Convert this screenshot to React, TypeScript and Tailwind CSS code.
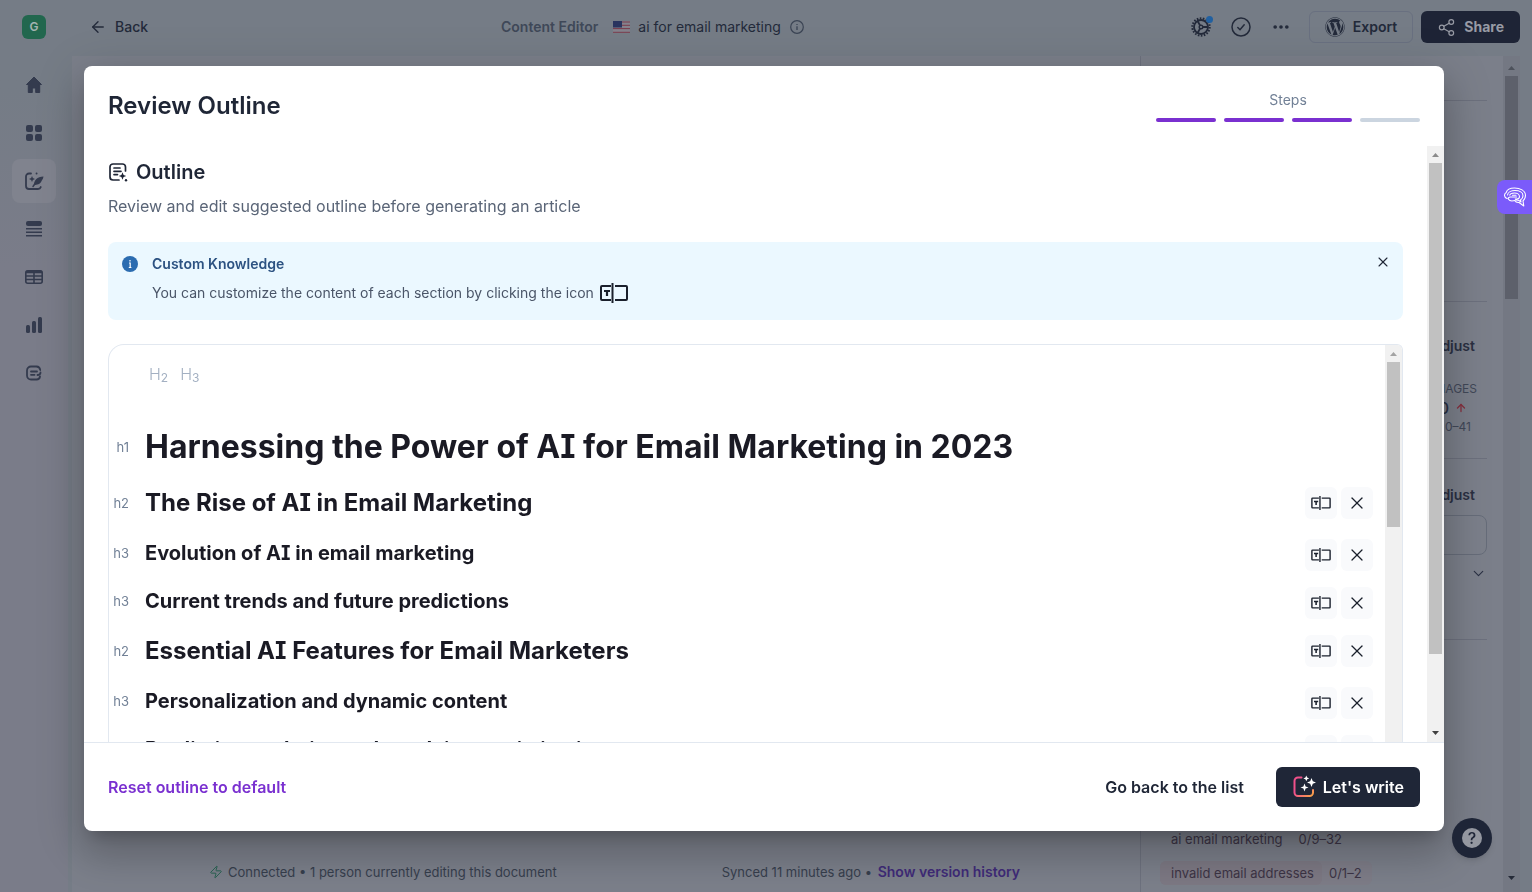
import type { ReactNode } from 'react';
import { ArrowLeft, ArrowUp, ChevronDown, Ellipsis, Share2, X, Zap } from 'lucide-react';
import { FaWordpress } from 'react-icons/fa';

type Level = 'h1' | 'h2' | 'h3';

const outline: { level: Level; text: string }[] = [
    { level: 'h2', text: 'The Rise of AI in Email Marketing' },
    { level: 'h3', text: 'Evolution of AI in email marketing' },
    { level: 'h3', text: 'Current trends and future predictions' },
    { level: 'h2', text: 'Essential AI Features for Email Marketers' },
    { level: 'h3', text: 'Personalization and dynamic content' },
    { level: 'h3', text: 'Predictive analytics and send time optimization' },
];

const SectionIcon = ({ className }: { className: string }) => (
    <svg viewBox="0 0 28 20" className={className} fill="none" stroke="currentColor" strokeWidth="2" aria-hidden="true">
        <path d="M11 3H2a1 1 0 0 0-1 1v12a1 1 0 0 0 1 1h9M12.500 0v20M15 3h11a1 1 0 0 1 1 1v12a1 1 0 0 1-1 1H15" />
        <path d="M4 8h6M7 8v5" strokeWidth="2.200" />
    </svg>
);

const OutlineIcon = () => (
    <svg viewBox="0 0 20 20" className="w-5 h-5" fill="none" stroke="currentColor" strokeWidth="1.700" strokeLinecap="round" aria-hidden="true">
        <path d="M17.500 9V5a3 3 0 0 0-3-3H5a3 3 0 0 0-3 3v10a3 3 0 0 0 3 3h6" />
        <path d="M6 6h6M6 9.300h7M6 12.600h3.500" />
        <path d="M14.500 10.200l1.100 2.700 2.700 1.100-2.700 1.100-1.100 2.700-1.100-2.700-2.700-1.100 2.700-1.100z" fill="currentColor" stroke="none" />
        <circle cx="18" cy="18.300" r="1.200" fill="currentColor" stroke="none" />
    </svg>
);

const GearIcon = () => (
    <svg viewBox="0 0 20 20" className="w-5 h-5" fill="none" stroke="currentColor" aria-hidden="true">
        <circle cx="10" cy="10" r="8.700" strokeWidth="2" strokeDasharray="1.600 1.437" />
        <circle cx="10" cy="10" r="7" strokeWidth="1.800" />
        <circle cx="10" cy="10" r="1.800" strokeWidth="1.400" />
        <path d="M12 10h5M9 8.300L6.500 4M9 11.700L6.500 16" strokeWidth="1.800" />
    </svg>
);

const WriteIcon = () => (
    <svg viewBox="0 0 24 24" className="w-6 h-6" fill="none" aria-hidden="true">
        <defs>
            <linearGradient id="write" x1="2" y1="3" x2="22" y2="23" gradientUnits="userSpaceOnUse">
                <stop offset="0.400" stopColor="#f0508a" />
                <stop offset="1" stopColor="#fbb13c" />
            </linearGradient>
        </defs>
        <path d="M9.500 2.500H6A3.500 3.500 0 0 0 2.500 6v11.500A3.500 3.500 0 0 0 6 21h11.500a3.500 3.500 0 0 0 3.500-3.500V15" stroke="url(#write)" strokeWidth="2" strokeLinecap="round" />
        <g fill="#fff">
            <path d="M19.500 3l1.300 3.200L24 7.500l-3.200 1.300-1.300 3.200-1.300-3.200L15 7.500l3.200-1.300z" />
            <path d="M12.500 8.500l1.100 2.900 2.900 1.100-2.900 1.100-1.100 2.900-1.100-2.900-2.900-1.100 2.900-1.100z" />
            <path d="M14.300.5l.9 2 2 .9-2 .9-.9 2-.9-2-2-.9 2-.9z" />
        </g>
    </svg>
);

const BrainIcon = () => (
    <svg viewBox="0 0 24 20" className="w-6 h-5" fill="none" stroke="#fff" strokeWidth="1.100" strokeLinecap="round" strokeLinejoin="round" aria-hidden="true">
        <path d="M4 11.500C1 10.500.7 7 3.200 5.500 4 2.500 8 1 11.500 1c5.500 0 11 2.500 11 7.500 0 3-1.200 4.200-2.500 5.500l.8 5-4.800-3.500c-2 .2-3.500-.5-4-2-3 .8-5.500.5-6.500-1.200-.8-1.300.5-2.500 2-2.300h6" />
        <path d="M4.500 8c.3-3 4-4.500 7.500-4.500 4.500 0 8 2 8 5.200 0 2-1 3.300-2.500 4.300l.5 2-2.500-1.800c-1.500.2-2.700-.2-3.200-1.200 2.500 0 4.200-.8 4.200-2.300C16.500 7.500 14 6 11.500 6 9 6 7 7 6.800 8.200" />
        <path d="M9.500 8.200h3.500" />
    </svg>
);

const navItems: { label: string; icon: ReactNode }[] = [
    {
        label: 'Home',
        icon: <path d="M10 2L2.500 9.500h1.800v8h4V13h3.400v4.500h4v-8h1.800z" fill="currentColor" stroke="currentColor" strokeLinejoin="round" />,
    },
    {
        label: 'Dashboard',
        icon: (
            <g fill="currentColor">
                <rect x="2" y="2" width="7" height="7" rx="2" />
                <rect x="11" y="2" width="7" height="7" rx="2" />
                <rect x="2" y="11" width="7" height="7" rx="2" />
                <rect x="11" y="11" width="7" height="7" rx="2" />
            </g>
        ),
    },
    {
        label: 'Content Editor',
        icon: (
            <g fill="none" stroke="currentColor" strokeWidth="1.800" strokeLinecap="round">
                <path d="M7 2.500H5a3 3 0 0 0-3 3V15a3 3 0 0 0 3 3h9a3 3 0 0 0 2.800-2" />
                <path d="M10 14c0-5 3-8 9.500-8.500-.3 2-1 3-1.800 4.200-1.500 3.500-4.700 4.300-7.700 4.300z" fill="currentColor" stroke="none" />
                <path d="M9 15.500l3.500-5" strokeWidth="1.500" />
                <path d="M8 5l.9 2.100 2.100.9-2.100.9L8 11l-.9-2.100L5 8l2.100-.9z" fill="currentColor" stroke="none" />
                <path d="M12.500 2.500h.1" />
            </g>
        ),
    },
    {
        label: 'Queries',
        icon: (
            <g fill="currentColor">
                <rect x="2" y="2" width="16" height="5" rx="2" />
                <rect x="2" y="9" width="16" height="1.500" />
                <rect x="2" y="12.500" width="16" height="1.500" />
                <rect x="2" y="16" width="16" height="1.500" />
            </g>
        ),
    },
    {
        label: 'Tables',
        icon: (
            <g fill="none" stroke="currentColor" strokeWidth="1.600">
                <rect x="1.800" y="3.800" width="16.400" height="12.400" rx="2" />
                <path d="M2 5h16" strokeWidth="2.500" />
                <path d="M2 9h16M2 12.500h16M10 5v11" />
            </g>
        ),
    },
    {
        label: 'Reports',
        icon: (
            <g fill="currentColor">
                <rect x="2" y="10" width="4" height="8" rx="1.500" />
                <rect x="8" y="6" width="4" height="12" rx="1.500" />
                <rect x="14" y="2" width="4" height="16" rx="1.500" />
            </g>
        ),
    },
    {
        label: 'Drafts',
        icon: (
            <g fill="none" stroke="currentColor" strokeWidth="1.800" strokeLinecap="round">
                <path d="M16.200 7A4 4 0 0 0 12.500 3.500H7A4 4 0 0 0 3 7.500v5a4 4 0 0 0 4 4h5.500a3.500 3.500 0 0 0 3.500-3" />
                <path d="M7 8.500h6M7 11.800h3.500" />
                <path d="M13.500 12c2 0 3-1 3-2.500" />
            </g>
        ),
    },
];

const Arrow = ({ up = false, className = '' }: { up?: boolean; className?: string }) => (
    <svg viewBox="0 0 7 4" className={`w-[7px] h-1 ${className}`} fill="currentColor" aria-hidden="true">
        <path d={up ? 'M0 4l3.500-4L7 4z' : 'M0 0l3.500 4L7 0z'} />
    </svg>
);

const Sidebar = () => (
    <aside className="w-[68px] shrink-0 flex flex-col items-center pt-[15px] bg-linear-to-b from-[#757c86] from-10% to-[#7a7c89] to-30% text-[#343b4e]">
        <div className="w-6 h-6 rounded-md bg-[#22674e] text-[#a4b4b2] text-xs font-semibold flex items-center justify-center">G</div>
        <nav className="mt-6 flex flex-col gap-1">
            {navItems.map((item, i) => (
                <a
                    key={item.label}
                    href="#"
                    aria-label={item.label}
                    className={`w-11 h-11 rounded-lg flex items-center justify-center ${i === 2 ? 'bg-[#80838e]' : ''}`}
                >
                    <svg viewBox="0 0 20 20" className="w-5 h-5">{item.icon}</svg>
                </a>
            ))}
        </nav>
    </aside>
);

const TopBar = () => (
    <header className="h-[54px] shrink-0 flex items-center justify-between pl-[21px] text-sm text-[#232a3a]">
        <button className="flex items-center gap-2 font-medium">
            <ArrowLeft size={18} strokeWidth={1.8} /> Back
        </button>
        <div className="flex items-center">
            <span className="font-semibold text-[#3f4858]">Content Editor</span>
            <svg viewBox="0 0 17 12" className="ml-[15px] mr-2 w-[17px] h-3" aria-hidden="true">
                <rect width="17" height="12" fill="#84828c" />
                <path d="M0 1h17M0 4.300h17M0 7.600h17M0 11.300h17" stroke="#7b3b4c" strokeWidth="1" />
                <rect width="9" height="6.500" fill="#29345f" />
            </svg>
            <span>ai for email marketing</span>
            <svg viewBox="0 0 14 14" className="ml-[9px] w-3.5 h-3.5" fill="none" stroke="#3b4454" aria-hidden="true">
                <circle cx="7" cy="7" r="6.300" strokeWidth="1.200" />
                <path d="M7 6.300V10M7 4v1" strokeWidth="1.300" />
            </svg>
        </div>
        <div className="pl-[34px] flex items-center">
            <button aria-label="Settings" className="relative w-10 flex justify-center -ml-2.5">
                <GearIcon />
                <span className="absolute right-2 top-0 -mt-px w-[7px] h-[7px] rounded-full bg-[#2160a0]" />
            </button>
            <button aria-label="Mark as done" className="w-10 flex justify-center">
                <svg viewBox="0 0 20 20" className="w-5 h-5" fill="none" stroke="currentColor" strokeWidth="1.500" strokeLinecap="round">
                    <circle cx="10" cy="10" r="9" />
                    <path d="M6.800 10.500l2.200 2.200 4.200-5" />
                </svg>
            </button>
            <button aria-label="More" className="w-10 flex justify-center">
                <Ellipsis size={20} strokeWidth={2.4} />
            </button>
            <button className="ml-2 h-8 px-[15px] flex items-center gap-2 rounded-md border border-[#697080] font-semibold">
                <FaWordpress size={20} /> Export
            </button>
            <button className="ml-2 h-8 px-4 flex items-center gap-2 rounded-md bg-[#1e2436] text-[#989ba5] font-bold">
                <Share2 size={19} strokeWidth={1.5} /> Share
            </button>
        </div>
    </header>
);

const SidePanel = () => (
    <section className="w-[363px] shrink-0 border-l border-[#6d717e] pt-11 pr-4 pl-[19px] flex flex-col items-end text-[#2a3042]">
        <div className="w-full border-t border-[#6c707d] h-[201px]" />
        <div className="w-full border-t border-[#6c707d] h-[157px] pt-[34px] pr-3 text-right">
            <p className="text-sm leading-5 font-semibold">Adjust</p>
            <p className="mt-[25px] -mr-0.5 text-xs leading-4 text-[#414858]">IMAGES</p>
            <p className="mt-px pr-2 flex items-center justify-end gap-1.5 text-base leading-5 font-medium">
                0 <ArrowUp size={12} strokeWidth={2.6} className="text-[#85303f]" />
            </p>
            <p className="pr-1 mt-px text-xs leading-4 text-[#414858]">0–41</p>
        </div>
        <div className="w-full border-t border-[#6c707d] h-[181px] pt-[26px]">
            <p className="pr-3 text-right text-sm leading-5 font-semibold">Adjust</p>
            <input aria-label="Search terms" className="mt-2.5 block w-full h-10 rounded-lg border border-[#666c79]" />
            <ChevronDown size={17} strokeWidth={1.6} className="ml-auto mt-2.5" />
        </div>
        <div className="w-full flex-1 border-t border-[#6c707d] flex flex-col justify-end items-start gap-2.5 pb-[7px] text-[13px] leading-6 text-[#3c3445]">
            <p className="pl-[11px] flex gap-4">
                <span>ai email marketing</span> <span>0/9–32</span>
            </p>
            <p className="pr-2.5 flex rounded-md bg-[#7d7c87]">
                <span className="pl-[11px] pr-2 rounded-md bg-[#7c7883]">invalid email addresses</span>
                <span className="pl-[7px]">0/1–2</span>
            </p>
        </div>
    </section>
);

const Backdrop = () => (
    <div className="h-screen flex bg-[#757c86]">
        <Sidebar />
        <div className="flex-1 min-w-0 flex flex-col pr-3">
            <TopBar />
            <main className="mt-0.5 ml-1 flex-1 min-h-0 flex bg-[#7b7f8a] overflow-hidden">
                <div className="flex-1 flex flex-col justify-end px-[120px] pb-2.5">
                    <div className="ml-[17px] flex items-center justify-between text-[13px] leading-5 text-[#363e4d]">
                        <p className="flex items-center gap-[5px]">
                            <Zap size={14} strokeWidth={1.6} className="text-[#256150]" /> Connected • 1 person currently editing this document
                        </p>
                        <p>
                            Synced 11 minutes ago • <a href="#" className="ml-0.5 text-sm font-semibold text-[#3f2b78]">Show version history</a>
                        </p>
                    </div>
                </div>
                <SidePanel />
                <div className="w-[17px] shrink-0 pt-[10px] pb-3 flex flex-col items-center bg-[#747883] text-[#4d515b]">
                    <Arrow up />
                    <div className="mt-1.5 w-[13px] h-[223px] bg-[#5d606b]" />
                    <Arrow className="mt-auto text-[#252a38]" />
                </div>
            </main>
        </div>
    </div>
);

const RowLabel = ({ level }: { level: Level }) => (
    <span className="w-5 shrink-0 text-right text-[13px] leading-4 text-[#718096]">{level}</span>
);

const OutlineRow = ({ level, text }: { level: Level; text: string }) => (
    <div className={`h-12 flex items-center ${level === 'h2' ? 'mb-1' : ''}`}>
        <div className={`flex-1 flex items-center gap-4 ${level === 'h3' ? 'pb-1' : ''}`}>
            <RowLabel level={level} />
            {level === 'h2' ? (
                <h2 className="text-2xl font-[650]">{text}</h2>
            ) : (
                <h3 className="text-xl font-[650]">{text}</h3>
            )}
        </div>
        <div className="flex gap-1 text-[#1a202c]">
            <button aria-label={`Customize ${text}`} className="w-8 h-8 rounded-md bg-[#f9fafc] flex items-center justify-center">
                <SectionIcon className="w-5 h-3.5" />
            </button>
            <button aria-label={`Remove ${text}`} className="w-8 h-8 rounded-md bg-[#f9fafc] flex items-center justify-center">
                <X size={20} strokeWidth={1.5} />
            </button>
        </div>
    </div>
);

const OutlineEditor = () => (
    <div className="mt-6 flex-1 min-h-0 flex border border-b-0 border-[#e2e8f0] rounded-tl-2xl rounded-tr-md overflow-hidden text-[#1a1a24]">
        <div className="flex-1 min-w-0 pr-3">
            <div className="pt-[17px] pb-px pl-10 flex gap-3 text-[#a3b0c2] font-light">
                <button aria-label="Heading 2" className="leading-6">H<span className="inline-block translate-y-0.5 text-xs font-normal">2</span></button>
                <button aria-label="Heading 3" className="leading-6">H<span className="inline-block translate-y-0.5 text-xs font-normal">3</span></button>
            </div>
            <div className="mt-9 mb-2 h-12 flex items-center gap-4 [font-feature-settings:'cv08']">
                <RowLabel level="h1" />
                <h1 className="text-[32px] leading-10 font-[650]">Harnessing the Power of AI for Email Marketing in 2023</h1>
            </div>
            <div className="[font-feature-settings:'cv08']">
                {outline.map((item) => (
                    <OutlineRow key={item.text} {...item} />
                ))}
            </div>
        </div>
        <div className="w-[17px] shrink-0 bg-[#f1f1f1] pt-[7px] flex flex-col items-center text-[#a3a3a3]">
            <Arrow up />
            <div className="mt-1.5 w-[13px] h-[165px] bg-[#c1c1c1]" />
        </div>
    </div>
);

const ReviewDialog = () => (
    <div className="fixed inset-0 flex pl-[84px] pr-[88px] pt-[66px] pb-[61px]">
        <div
            role="dialog"
            aria-labelledby="dialog-title"
            className="flex-1 min-w-0 flex flex-col rounded-lg bg-white overflow-hidden text-[#1f2636] shadow-[0_11px_15px_-7px_rgba(0,0,0,0.2),0_24px_38px_3px_rgba(0,0,0,0.14),0_9px_46px_8px_rgba(0,0,0,0.12)]"
        >
            <div className="h-20 shrink-0 px-6 flex items-center justify-between">
                <h1 id="dialog-title" className="text-2xl font-semibold">Review Outline</h1>
                <div className="flex flex-col items-center gap-2">
                    <span className="text-sm text-[#718096]">Steps</span>
                    <div className="flex gap-2">
                        {[1, 2, 3, 4].map((step) => (
                            <span key={step} className={`w-[60px] h-1 rounded-sm ${step < 4 ? 'bg-[#7a30d0]' : 'bg-[#cbd5e0]'}`} />
                        ))}
                    </div>
                </div>
            </div>

            {/* Body */}
            <div className="flex-1 min-h-0 flex">
                <div className="flex-1 min-w-0 px-6 pt-3 flex flex-col">
                    <h2 className="flex items-center gap-2 text-xl leading-7 font-semibold">
                        <OutlineIcon /> Outline
                    </h2>
                    <p className="mt-2 text-base text-[#5a6577]">Review and edit suggested outline before generating an article</p>

                    <div className="mt-6 h-[78px] shrink-0 flex pl-3.5 pr-3 pt-3 rounded-lg bg-[#ebf8ff] text-sm">
                        <svg viewBox="0 0 16 16" className="mt-0.5 w-4 h-4" aria-hidden="true">
                            <circle cx="8" cy="8" r="8" fill="#2b6cb0" />
                            <path d="M7 7h1.200v4.500M8 4v1.400M6.800 11.500h2.600" fill="none" stroke="#fff" strokeWidth="1.200" />
                        </svg>
                        <div className="ml-3.5 flex-1">
                            <p className="font-semibold text-[#2c5282]">Custom Knowledge</p>
                            <p className="mt-[9px] flex items-center gap-1.5 text-[#4a5568]">
                                You can customize the content of each section by clicking the icon
                                <SectionIcon className="w-7 h-5 text-[#1a202c]" />
                            </p>
                        </div>
                        <button aria-label="Close" className="h-4">
                            <X size={16} strokeWidth={1.6} />
                        </button>
                    </div>

                    <OutlineEditor />
                </div>
                <div className="w-[17px] shrink-0 pt-[7px] pb-[7px] flex flex-col items-center bg-[#f1f1f1] text-[#8b8b8b]">
                    <Arrow up />
                    <div className="mt-1.5 w-[13px] h-[491px] bg-[#c1c1c1]" />
                    <Arrow className="mt-auto text-[#404040]" />
                </div>
            </div>

            {/* Footer */}
            <div className="h-[89px] shrink-0 border-t border-[#e2e8f0] px-6 flex items-center justify-between font-semibold">
                <button className="text-[#7a30d0]">Reset outline to default</button>
                <div className="flex items-center gap-8">
                    <button>Go back to the list</button>
                    <button className="h-10 px-4 flex items-center gap-[7px] rounded-md bg-[#1f2637] text-white">
                        <WriteIcon /> Let's write
                    </button>
                </div>
            </div>
        </div>
    </div>
);

const App = () => (
    <div className="font-[Inter,sans-serif]">
        <Backdrop />
        <ReviewDialog />
        <button aria-label="Open assistant" className="fixed right-0 top-[180px] w-[35px] h-[34px] rounded-l-lg bg-[#7b5bfa] flex items-center justify-center">
            <BrainIcon />
        </button>
        <button aria-label="Help" className="fixed right-10 bottom-[34px] w-10 h-10 rounded-full bg-[#1e2537] shadow-md flex items-center justify-center">
            <span className="w-5 h-5 rounded-full bg-[#9497a0] text-[#1e2537] text-base leading-5 font-medium">?</span>
        </button>
    </div>
);

export default App;
